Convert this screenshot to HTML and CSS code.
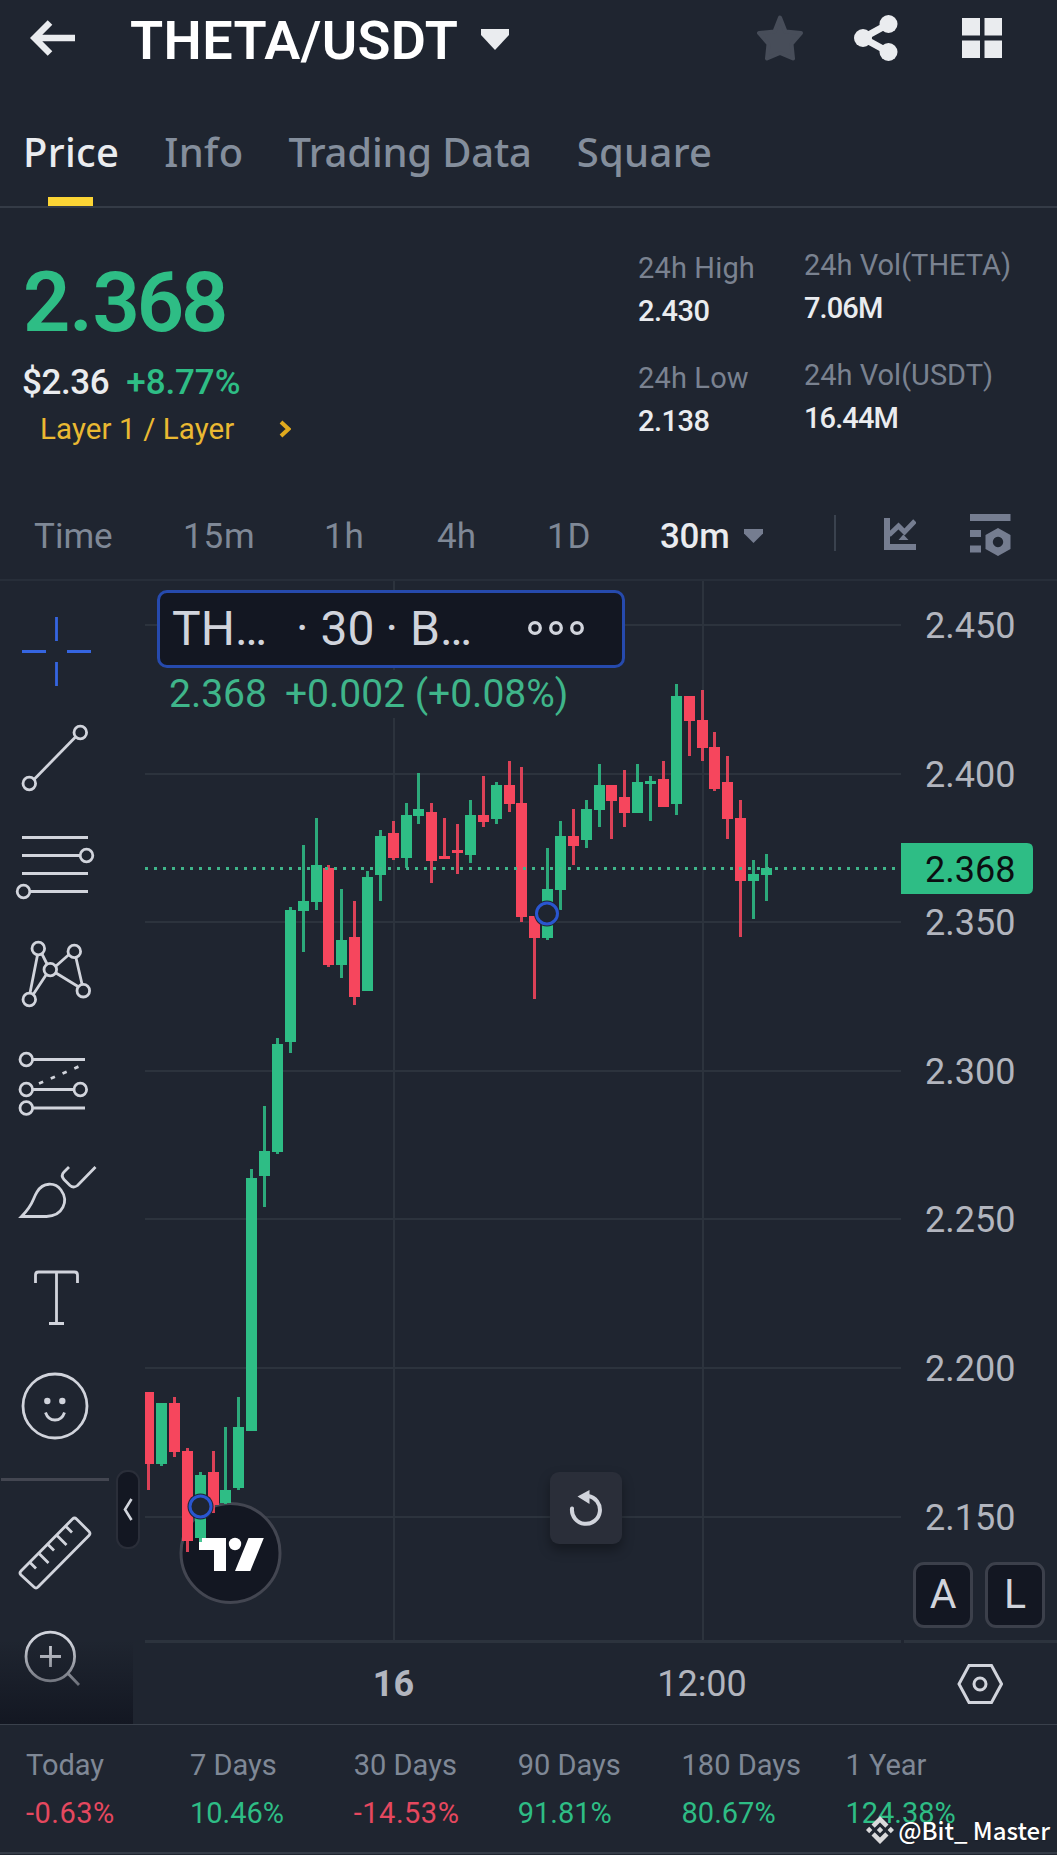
FILE: index.html
```
<!DOCTYPE html>
<html lang="en">
<head>
    <meta charset="UTF-8">
    <meta name="viewport" content="width=device-width, initial-scale=1.0">
    <title>THETA/USDT</title>
    <link rel="stylesheet" href="styles.css">
</head>
<body>
    <div class="page">
        <!-- Header -->
        <header class="header">
            <svg class="back" width="46" height="36" viewBox="0 0 46 36"><path d="M45 18H5M20 2.5L4.5 18 20 33.5" /></svg>
            <h1>THETA/USDT</h1>
            <svg class="title-caret" width="28" height="21" viewBox="0 0 28 21"><path d="M0 0h28v6L14 21 0 6z" /></svg>
            <div class="header-actions">
                <svg class="star" width="46" height="46" viewBox="0 0 46 46"><path d="M23 2.5l5.500 14 15.500 1.500-9.500 11L36 43.500 23 38 10 43.500 11.500 29 2 18l15.500-1.500z" /></svg>
                <svg class="share" width="44" height="46" viewBox="0 0 44 46">
                    <path d="M34.500 9L9 23l25.500 14" />
                    <circle cx="34.500" cy="9" r="9" /><circle cx="9" cy="23" r="9" /><circle cx="34.500" cy="37" r="9" />
                </svg>
                <svg class="grid-icon" width="40" height="40" viewBox="0 0 40 40"><path d="M0 0h18v17.500H0zM22.500 0h17.500v17.500H22.500zM0 22.500h18V40H0zM22.500 22.500h17.500V40H22.500z" /></svg>
            </div>
        </header>

        <!-- Tabs -->
        <nav class="tabs">
            <a class="tab active">Price</a>
            <a class="tab">Info</a>
            <a class="tab wide">Trading Data</a>
            <a class="tab">Square</a>
        </nav>

        <!-- Ticker -->
        <section class="ticker">
            <div class="quote">
                <div class="last-price">2<span>.</span>368</div>
                <div class="sub-price"><span class="usd">$2.36</span><span class="up">+8.77%</span></div>
                <div class="tag">
                    <span>Layer 1 / Layer</span>
                    <svg width="12" height="18" viewBox="0 0 12 18"><path d="M2 2l7.500 7L2 16" /></svg>
                </div>
            </div>
            <div class="stats">
                <div class="stat"><label>24h High</label><b>2.430</b></div>
                <div class="stat"><label>24h Low</label><b>2.138</b></div>
            </div>
            <div class="stats volume">
                <div class="stat"><label>24h Vol(THETA)</label><b>7.06M</b></div>
                <div class="stat"><label>24h Vol(USDT)</label><b>16.44M</b></div>
            </div>
        </section>

        <!-- Intervals -->
        <div class="intervals">
            <span>Time</span>
            <span class="spaced">15m</span>
            <span class="spaced">1h</span>
            <span>4h</span>
            <span class="spaced">1D</span>
            <span class="current">30m <svg width="19" height="14" viewBox="0 0 19 14"><path d="M0 0h19v4.500L9.500 14 0 4.500z" /></svg></span>
            <i class="divider"></i>
            <svg class="line-icon" width="32" height="32" viewBox="0 0 32 32">
                <path d="M0 0h6v26h26v6H0zM14.500 22l4.800-5.500 5.200 5.500z" />
                <path class="stroke" d="M5 17l9.500-9 6 6L31 3" />
            </svg>
            <svg class="settings-icon" width="41" height="42" viewBox="0 0 41 42">
                <path fill-rule="evenodd" d="M0 0h40.500v7H0zM0 16h11v7H0zM0 31.500h11v7H0zM28 14l12.500 7v14L28 42l-12.500-7V21zM28 22.800a5.200 5.200 0 1 0 .01 0z" />
            </svg>
        </div>

        <!-- Chart -->
        <section class="chart">
            <aside class="toolbar">
                <svg class="tool cross" viewBox="0 0 112 108"><path d="M56.500 19v24M56.500 64v24M22 53.500h24M67 53.500h24" /></svg>
                <svg class="tool" viewBox="0 0 112 108"><path d="M34 73.500L75.500 31" /><circle cx="80.300" cy="26.500" r="6.300" /><circle cx="29.300" cy="77.500" r="6.300" /></svg>
                <svg class="tool" viewBox="0 0 112 108"><path d="M22 23.500h66M22 41.500h58M22 59.500h66M30 77.500h58" /><circle cx="86.500" cy="41.500" r="6.300" /><circle cx="23.500" cy="77.500" r="6.300" /></svg>
                <svg class="tool" viewBox="0 0 112 108"><path d="M37.500 33l-7.500 38M42 32l5 10M56 44l13-11.500M76 36l6 26M56 51l22 13.500M46 53L33.500 72" /><circle cx="38.300" cy="26.500" r="6.300" /><circle cx="74.300" cy="29.400" r="6.300" /><circle cx="50.300" cy="47.600" r="6.300" /><circle cx="29.300" cy="77.500" r="6.300" /><circle cx="83.300" cy="68.700" r="6.300" /></svg>
                <svg class="tool" viewBox="0 0 112 108"><path d="M33 29.500h52M33 59.500h41M33 78h52" /><path stroke-dasharray="4.500 8.300" d="M39 53.500l41-17.500" /><circle cx="26.300" cy="29.500" r="6.300" /><circle cx="26.300" cy="59.500" r="6.300" /><circle cx="80.300" cy="59.500" r="6.300" /><circle cx="26.300" cy="78" r="6.300" /></svg>
                <svg class="tool" viewBox="0 0 112 108"><path d="M21.500 78.500C34 66 32 62 37 54c6-10 18-10 24-2 8 11 2 26-14.500 26.500zM69 29l-5 5q-3.500 3.500 0 7.500l6 6q3.500 3 7.500 0L95.500 29" /></svg>
                <svg class="tool" viewBox="0 0 112 108"><path d="M35.500 37v-8q0-3 3-3h36q3 0 3 3v8M56.500 26v51M49 77.500h15" /></svg>
                <svg class="tool" viewBox="0 0 112 108"><circle cx="55" cy="52" r="32" /><path d="M45.500 58.500q2.500 7.500 9.500 7.500t9.500-7.500" /><circle class="dot" cx="47.300" cy="47" r="3.200" /><circle class="dot" cx="62.300" cy="47" r="3.200" /></svg>
                <hr>
                <svg class="tool" viewBox="0 0 112 108"><path d="M72.500 21q2-2 4 0l12.500 12.500q2 2 0 4L38 89q-2 2-4 0L21 77q-2-2 0-4zM30.500 65l5.500 5.500M39.500 56l9 9M48.500 47l5.500 5.500M57.500 38l9 9M66.500 29l5.500 5.500" /></svg>
                <svg class="tool" viewBox="0 0 112 108"><circle cx="50.300" cy="50.500" r="24.300" /><path d="M40 50.500h21M50.500 40v21M68 67.500L79 79" /></svg>
                <div class="fade"></div>
            </aside>
            <svg class="plot" id="plot" width="924" height="1143" viewBox="133 581 924 1143"></svg>

            <div class="collapse"><svg width="10" height="23" viewBox="0 0 10 23"><path d="M8.500 1L2 11.500 8.500 22" /></svg></div>
            <div class="legend">
                <span class="symbol">TH…</span><span class="dot-sep">·</span><span>30</span><span class="dot-sep2">·</span><span>B…</span>
                <svg width="56" height="14" viewBox="0 0 56 14"><circle cx="7" cy="7" r="5.300" /><circle cx="28" cy="7" r="5.300" /><circle cx="49" cy="7" r="5.300" /></svg>
            </div>
            <div class="legend-values"><span>2.368</span><span>+0.002 (+0.08%)</span></div>
            <div class="reset"><svg width="34" height="38" viewBox="0 0 34 38"><path class="arc" d="M3 19.500A14 14 0 1 0 19 7" /><path d="M8.500 7.500L20.500 1v14z" /></svg></div>
            <div class="scale-buttons"><span>A</span><span>L</span></div>
            <svg class="gear" width="46" height="40" viewBox="0 0 46 40"><path d="M12 1.500h22.500L44.500 20 34.500 38.500H12L2 20z" /><circle cx="23" cy="20" r="6" /></svg>
        </section>

        <!-- Performance -->
        <section class="performance">
            <div><label>Today</label><span class="down">-0.63%</span></div>
            <div><label>7 Days</label><span class="up">10.46%</span></div>
            <div><label>30 Days</label><span class="down">-14.53%</span></div>
            <div><label>90 Days</label><span class="up">91.81%</span></div>
            <div><label>180 Days</label><span class="up">80.67%</span></div>
            <div><label>1 Year</label><span class="up">124.38%</span></div>
        </section>

        <div class="watermark">
            <svg width="28" height="28" viewBox="0 0 28 28"><path d="M14 0l8.500 8.500-3.200 3.200L14 6.400l-5.300 5.300-3.200-3.200zM14 28l8.500-8.500-3.200-3.200L14 21.600l-5.300-5.300-3.200 3.200zM14 10.800l3.200 3.200-3.200 3.200-3.200-3.200zM3.200 10.800L6.400 14l-3.200 3.200L0 14zM24.800 10.800L28 14l-3.200 3.200-3.200-3.200z" /></svg>
            <span>@Bit_ Master</span>
        </div>
    </div>

    <script>
        /* Candles: color, body left, body top, body bottom, wick top, wick bottom */
        const candles = [
            ['r', 143, 1392, 1464, 1392, 1490], ['g', 156, 1403, 1464, 1403, 1466], ['r', 169, 1403, 1452, 1397, 1457],
            ['r', 182, 1451, 1541, 1448, 1552], ['g', 195, 1475, 1538, 1472, 1542], ['r', 208, 1472, 1505, 1451, 1513],
            ['g', 220, 1490, 1503, 1427, 1504], ['g', 233, 1427, 1488, 1397, 1490], ['g', 246, 1178, 1431, 1169, 1431],
            ['g', 259, 1151, 1176, 1106, 1207], ['g', 272, 1044, 1152, 1038, 1154], ['g', 285, 910, 1042, 907, 1053],
            ['g', 298, 901, 911, 845, 952], ['g', 311, 865, 902, 818, 910], ['r', 323, 868, 965, 865, 967],
            ['g', 336, 940, 965, 889, 978], ['r', 349, 937, 997, 901, 1005], ['g', 362, 877, 991, 871, 991],
            ['g', 375, 836, 875, 830, 901], ['r', 388, 833, 858, 821, 860], ['g', 401, 815, 858, 803, 868],
            ['g', 413, 809, 816, 773, 824], ['r', 426, 812, 861, 803, 883], ['r', 439, 856, 859, 818, 859],
            ['r', 452, 850, 853, 824, 874], ['g', 465, 815, 855, 800, 863], ['r', 478, 815, 822, 776, 827],
            ['g', 491, 785, 819, 782, 824], ['r', 504, 785, 804, 761, 812], ['r', 516, 803, 917, 767, 922],
            ['r', 529, 916, 938, 916, 999], ['g', 542, 889, 938, 848, 940], ['g', 555, 836, 890, 821, 910],
            ['r', 568, 836, 846, 809, 865], ['g', 581, 809, 840, 800, 848], ['g', 594, 785, 810, 764, 827],
            ['r', 606, 785, 801, 785, 839], ['r', 619, 797, 813, 770, 827], ['g', 632, 782, 813, 764, 813],
            ['g', 645, 781, 784, 776, 821], ['r', 658, 779, 807, 761, 807], ['g', 671, 696, 804, 684, 815],
            ['r', 684, 696, 721, 696, 756], ['r', 697, 720, 748, 690, 761], ['r', 709, 747, 789, 732, 791],
            ['r', 722, 782, 819, 756, 839], ['r', 735, 818, 881, 800, 937], ['g', 748, 874, 881, 860, 919],
            ['g', 761, 868, 875, 854, 901]
        ];
        const gridX = [393, 702];
        const prices = ['2.450', '2.400', '2.350', '2.300', '2.250', '2.200', '2.150'];
        let svg = '';

        /* Grid lines and price labels */
        gridX.forEach(x => {
            svg += `<rect class="grid" x="${x}" y="581" width="2" height="1060" />`;
        });
        prices.forEach((price, i) => {
            const y = Math.round(625 + i * 148.6);
            svg += `<rect class="grid" x="145" y="${y - 1}" width="756" height="2" />`;
            svg += `<text class="axis" x="925" y="${y + 13}">${price}</text>`;
        });
        svg += '<rect class="grid" x="145" y="1640" width="756" height="3" /><rect class="grid" x="904" y="1640" width="153" height="3" />';
        svg += '<text class="axis day" x="393.5" y="1696">16</text><text class="axis hour" x="702" y="1696">12:00</text>';

        /* Logo sits under the candles */
        svg += '<circle class="logo" cx="230.500" cy="1553" r="49.500" />';
        svg += '<path class="logo-mark" d="M199 1538h27v33h-12v-21h-15zM248.500 1538h15.300l-13.500 33H235z" /><circle class="logo-mark" cx="235" cy="1544" r="6.200" />';

        candles.forEach(([color, x, top, bottom, high, low]) => {
            const left = Math.max(x, 145);
            svg += `<rect class="wick ${color}" x="${x + 4}" y="${high}" width="3" height="${low - high}" />`;
            svg += `<rect class="${color}" x="${left}" y="${top}" width="${x + 11 - left}" height="${bottom - top}" />`;
        });

        /* Current price */
        svg += '<path class="price-line" d="M145 868.500H901" />';
        svg += '<path class="g" d="M901 843h126q6 0 6 6v39q0 6-6 6H901z" /><text class="axis price-text" x="925" y="882">2.368</text>';
        svg += '<circle class="halo" cx="547" cy="913.500" r="13" /><circle class="marker" cx="547" cy="913.500" r="10.500" />';
        svg += '<circle class="halo" cx="200.500" cy="1506.500" r="13" /><circle class="marker" cx="200.500" cy="1506.500" r="10.500" />';

        document.getElementById('plot').innerHTML = svg;
    </script>
</body>
</html>
```
FILE: styles.css
```
* {
    box-sizing: border-box;
}
body {
    margin: 0;
    background: #1f2530;
    color: #eaecef;
    font-family: Roboto, "Liberation Sans", sans-serif;
}
svg {
    display: block;
    flex: none;
}
.page {
    position: relative;
    width: 1057px;
    height: 1855px;
    overflow: hidden;
}
.up {
    color: #2ebd85;
}
.down {
    color: #e5485f;
}

/* Header */
.header {
    display: flex;
    align-items: center;
    height: 80px;
    padding: 0 55px 0 30px;
}
.back {
    margin: -4px 54px 0 0;
    fill: none;
    stroke: #eaecef;
    stroke-width: 6.5;
}
h1 {
    margin: 2px 23px 0 0;
    color: #fff;
    font-size: 54px;
    font-weight: 600;
    line-height: 80px;
    letter-spacing: 0.35px;
}
.title-caret {
    fill: #eaecef;
    margin-top: -2px;
}
.header-actions {
    display: flex;
    align-items: center;
    margin: -4px 0 0 auto;
}
.star {
    margin-right: 51px;
    fill: #474d59;
    stroke: #474d59;
    stroke-width: 4;
    stroke-linejoin: round;
}
.share {
    margin-right: 64px;
    fill: #eaecef;
}
.share path {
    fill: none;
    stroke: #eaecef;
    stroke-width: 7;
}
.grid-icon {
    fill: #eaecef;
}

/* Tabs */
.tabs {
    display: flex;
    gap: 45px;
    height: 128px;
    padding: 47px 23px 0;
    border-bottom: 2px solid #343b46;
}
.tab {
    position: relative;
    color: #848e9c;
    font-family: "Noto Sans", sans-serif;
    font-size: 40px;
    font-weight: 500;
    line-height: 50px;
    letter-spacing: 0.3px;
}
.tab.wide {
    letter-spacing: -0.2px;
}
.tab.active {
    color: #eaecef;
}
.tab.active::after {
    content: "";
    position: absolute;
    left: 25px;
    bottom: 0;
    width: 45px;
    height: 9px;
    background: #fcd535;
}

/* Ticker */
.ticker {
    display: grid;
    grid-template-columns: 615px 166px auto;
    height: 285px;
    padding: 36px 0 0 23px;
}
.quote {
    padding-top: 14px;
}
.last-price {
    color: #2ebd85;
    font-size: 83px;
    font-weight: 600;
    line-height: 90px;
    letter-spacing: -3.2px;
}
.last-price span {
    margin: 0 3px 0 2px;
}
.sub-price {
    display: flex;
    gap: 17px;
    margin-top: 15px;
    font-size: 35px;
    font-weight: 500;
    line-height: 40px;
    letter-spacing: -0.1px;
}
.sub-price .usd {
    margin-left: -1px;
    letter-spacing: -0.4px;
}
.tag {
    display: flex;
    align-items: center;
    gap: 45px;
    margin: 6px 0 0 17px;
    color: #eab932;
    font-size: 29.5px;
    line-height: 40px;
    letter-spacing: 0.1px;
}
.tag svg {
    fill: none;
    stroke: #e0aa1e;
    stroke-width: 4;
}
.stats {
    display: flex;
    flex-direction: column;
    gap: 27px;
    padding-top: 4px;
}
.volume {
    padding-top: 1px;
}
.stat {
    display: flex;
    flex-direction: column;
    gap: 3px;
    font-size: 29px;
    line-height: 40px;
}
.stat label {
    color: #7a8290;
    letter-spacing: 0.15px;
}
.volume label {
    letter-spacing: 0;
}
.stat b {
    font-weight: 500;
    letter-spacing: -0.5px;
}
.volume b {
    letter-spacing: -0.9px;
}

/* Intervals */
.intervals {
    display: grid;
    grid-template-columns: 149px 141px 113px 110px 113px 174px 50px 86px auto;
    align-items: center;
    height: 88px;
    padding-left: 34px;
    border-bottom: 2px solid #272e39;
    color: #7f8896;
    font-size: 35px;
}
.spaced {
    letter-spacing: 0.8px;
}
.current {
    display: flex;
    align-items: center;
    gap: 15px;
    color: #eaecef;
    font-weight: 500;
    letter-spacing: -0.3px;
}
.intervals svg {
    fill: #757d90;
}
.intervals .line-icon {
    margin-top: -4px;
}
.intervals .settings-icon {
    margin-top: -2px;
}
.line-icon .stroke {
    fill: none;
    stroke: #757d90;
    stroke-width: 5;
}
.divider {
    width: 2px;
    height: 36px;
    margin-top: -6px;
    background: #3a424e;
}

/* Chart */
.chart {
    position: relative;
    display: flex;
    height: 1143px;
}
.toolbar {
    position: relative;
    width: 133px;
    padding-top: 17px;
}
.tool {
    width: 112px;
    height: 108px;
    fill: none;
    stroke: #d1d4dc;
    stroke-width: 2.8;
}
.tool .dot {
    fill: #d1d4dc;
    stroke: none;
}
.tool.cross {
    stroke: #3565e0;
}
.toolbar hr {
    width: 108px;
    height: 3px;
    margin: 16px 0 17px 1px;
    border: 0;
    background: #434651;
}
.fade {
    position: absolute;
    left: 0;
    bottom: 0;
    width: 133px;
    height: 84px;
    background: linear-gradient(rgba(19, 23, 34, 0), #131722);
}
.collapse {
    position: absolute;
    left: 116px;
    top: 889px;
    display: flex;
    align-items: center;
    justify-content: center;
    width: 24px;
    height: 79px;
    border: 2px solid #2a2e39;
    border-radius: 11px;
    background: #131722;
}
.collapse svg {
    fill: none;
    stroke: #d1d4dc;
    stroke-width: 2.6;
}

/* Plot */
.grid {
    fill: #2c333d;
}
.g {
    fill: #2ebd85;
}
.r {
    fill: #f6465d;
}
.wick {
    opacity: 0.87;
}
.axis {
    fill: #b2b5be;
    font-size: 36px;
}
.axis.day {
    font-weight: 700;
    text-anchor: middle;
}
.axis.hour {
    text-anchor: middle;
}
.axis.price-text {
    fill: #0b0e11;
}
.price-line {
    stroke: #3fb58a;
    stroke-width: 3;
    stroke-dasharray: 3 6;
}
.halo {
    fill: #1f2530;
}
.marker {
    fill: none;
    stroke: #2a56d0;
    stroke-width: 3;
}
.logo {
    fill: #131722;
    stroke: #434651;
    stroke-width: 3;
}
.logo-mark {
    fill: #fff;
}

/* Overlays on the plot */
.legend {
    position: absolute;
    left: 157px;
    top: 9px;
    display: flex;
    align-items: center;
    width: 468px;
    height: 78px;
    padding: 0 38px 0 12px;
    border: 3px solid #264aad;
    border-radius: 10px;
    background: #131722;
    color: #d1d4dc;
    font-size: 48px;
    line-height: 72px;
}
.legend .dot-sep {
    margin: 0 12px 0 29px;
}
.legend .dot-sep2 {
    margin: 0 12px 0 11px;
}
.legend svg {
    margin: -2px 0 0 auto;
    fill: none;
    stroke: #d1d4dc;
    stroke-width: 3.3;
}
.legend-values {
    position: absolute;
    left: 157px;
    top: 89px;
    display: flex;
    gap: 18px;
    padding: 0 0 0 12px;
    background: #1f2530;
    color: #3fb58a;
    font-size: 39px;
    line-height: 48px;
}
.reset {
    position: absolute;
    left: 550px;
    top: 891px;
    display: flex;
    align-items: center;
    justify-content: center;
    width: 72px;
    height: 72px;
    border-radius: 9px;
    background: #2a2e39;
    box-shadow: 0 6px 12px rgba(0, 0, 0, 0.35);
}
.reset svg {
    fill: #d1d4dc;
}
.reset .arc {
    fill: none;
    stroke: #d1d4dc;
    stroke-width: 4;
    stroke-linecap: round;
}
.scale-buttons {
    position: absolute;
    left: 913px;
    top: 981px;
    display: flex;
    gap: 12px;
}
.scale-buttons span {
    width: 60px;
    height: 66px;
    border: 3px solid #3c404b;
    border-radius: 11px;
    background: #131722;
    color: #d1d4dc;
    font-size: 41px;
    line-height: 58px;
    text-align: center;
}
.gear {
    position: absolute;
    left: 957px;
    top: 1083px;
    fill: none;
    stroke: #d1d4dc;
    stroke-width: 3;
}

/* Performance */
.performance {
    display: grid;
    grid-template-columns: repeat(6, 163.9px);
    height: 130px;
    padding: 20px 0 0 26px;
    border-top: 1px solid #3a414c;
    border-bottom: 2px solid #343b46;
    font-size: 29px;
    line-height: 40px;
}
.performance div {
    display: flex;
    flex-direction: column;
    gap: 8px;
}
.performance label {
    color: #7f8896;
}
.performance .down {
    letter-spacing: 0.5px;
}
.watermark {
    position: absolute;
    right: 7px;
    top: 1815px;
    display: flex;
    align-items: center;
    gap: 4px;
    color: #fff;
    font-family: "Noto Sans CJK SC", sans-serif;
    font-size: 24px;
    font-weight: 500;
    line-height: 30px;
    text-shadow: 0 0 2px rgba(0, 0, 0, 0.4);
}
.watermark svg {
    fill: #d9d9db;
}
```
